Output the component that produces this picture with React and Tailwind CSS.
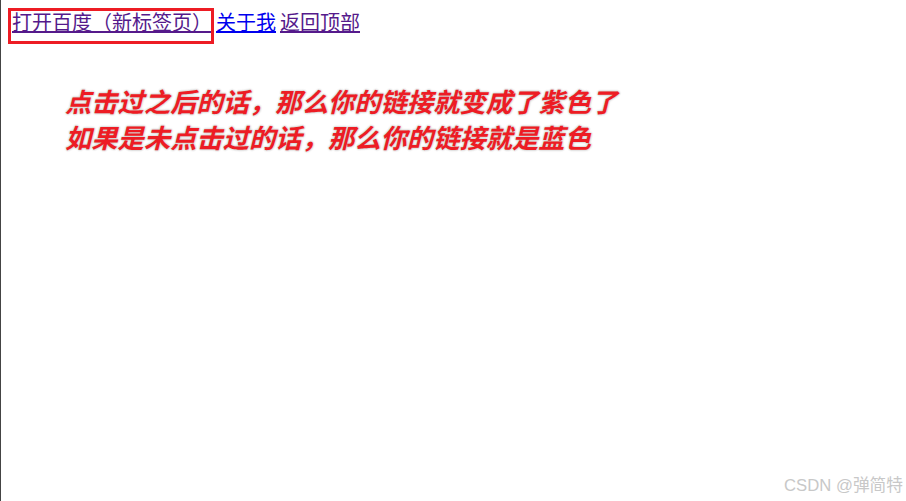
export default function App() {
  return (
    <div className="relative h-[501px] w-[906px] overflow-hidden bg-white border-l border-l-[#444] font-['Liberation_Serif','Noto_Sans_CJK_SC',serif]">
      <nav className="pl-[11px] pt-[10px] text-[20px] leading-[26px] whitespace-nowrap flex gap-[4px]">
        <a href="#a" className="relative underline text-[#551a8b] block">
          打开百度（新标签页）
          <span className="absolute left-[-4px] top-[-2px] w-[206px] h-[36px] border-[3px] border-[#ed1c24]" />
        </a>
        <a href="#b" className="underline text-[#0000ee] block">关于我</a>
        <a href="#c" className="underline text-[#551a8b] block">返回顶部</a>
      </nav>
      <div className="pl-[64px] pt-[47px] text-[26.3px] leading-[36px] font-bold italic text-[#ed1c24] font-['Noto_Sans_CJK_SC',sans-serif] [text-shadow:0_0_2px_#ccc,0_0_2px_#ccc,0_0_3px_#ddd] whitespace-nowrap">
        <p>点击过之后的话，那么你的链接就变成了紫色了</p>
        <p>如果是未点击过的话，那么你的链接就是蓝色</p>
      </div>
      <div className="absolute right-[3px] bottom-[4px] text-[16.7px] leading-[22px] text-[#c8c8c8] font-['Liberation_Sans','Noto_Sans_CJK_SC',sans-serif]">CSDN @弹简特</div>
    </div>
  );
}
